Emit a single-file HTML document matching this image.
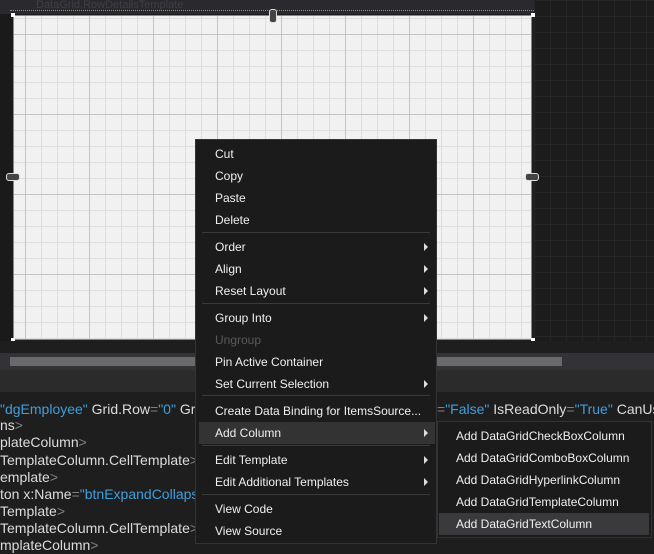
<!DOCTYPE html>
<html><head><style>
body{margin:0;width:654px;height:546px;background:#1e1e1e;overflow:hidden;position:relative;font-family:"Liberation Sans",sans-serif;}
.a{position:absolute}
.top{left:0;top:0;width:654px;height:14px;background:#2a2a2e}
.right{left:534px;top:0;width:120px;height:352px;background:#1c1c1c;
background-image:linear-gradient(#262626 1px,transparent 1px),linear-gradient(90deg,#262626 1px,transparent 1px);background-size:16px 16px}
.surf{left:13px;top:15px;width:519px;height:325px;background:#f1f1f1;
background-image:linear-gradient(#c4c4c4 1px,transparent 1px),linear-gradient(90deg,#c4c4c4 1px,transparent 1px),linear-gradient(#dedede 1px,transparent 1px),linear-gradient(90deg,#dedede 1px,transparent 1px);
background-size:64px 80px,64px 80px,16px 16px,16px 16px;background-position:11px 18px,11px 18px,-5px 2px,-5px 2px;
border:1px solid #6d8ac0;box-sizing:border-box}
.code{left:0;top:392px;width:654px;height:154px;background:#1e1e1e;font-size:14px;color:#dcdcdc;line-height:17px}
.code div{white-space:pre;position:absolute;left:0}
.s{color:#3f9fdc}.p{color:#808080}
.menu{left:195px;top:139px;width:242px;height:405px;background:#1b1b1b;border:1px solid #333;box-sizing:border-box;font-size:12px;color:#f0f0f0}
.it{position:absolute;left:19px;height:22px;line-height:22px;white-space:nowrap}
.ar{position:absolute;left:228px;width:0;height:0;border-left:4px solid #ddd;border-top:4px solid transparent;border-bottom:4px solid transparent}
.sep{position:absolute;left:6px;width:228px;height:1px;background:#3a3a3a}
.sub{left:437px;top:421px;width:215px;height:117px;background:#1b1b1b;border:1px solid #333;box-sizing:border-box;font-size:12px;color:#f0f0f0}
</style></head><body>
<div class="a top"></div>
<div class="a" style="left:36px;top:0;font-size:11px;color:#3e3e44;line-height:10px">DataGrid.RowDetailsTemplate</div>
<div class="a" style="left:10px;top:10px;width:524px;border-top:1px dotted #8090b0"></div>
<div class="a right"></div>
<div class="a" style="left:0;top:14px;width:13px;height:340px;background:#1a1a1a"></div>
<div class="a surf"></div>
<div class="a" style="left:11px;top:13px;width:4px;height:4px;background:#fff"></div>
<div class="a" style="left:531px;top:13px;width:4px;height:4px;background:#fff"></div>
<div class="a" style="left:11px;top:338px;width:4px;height:4px;background:#fff"></div>
<div class="a" style="left:531px;top:338px;width:4px;height:4px;background:#fff"></div>
<div class="a" style="left:269px;top:9px;width:8px;height:14px;background:#444;border:1px solid #ddd;border-radius:3px;box-sizing:border-box"></div>
<div class="a" style="left:6px;top:173px;width:14px;height:8px;background:#444;border:1px solid #ddd;border-radius:3px;box-sizing:border-box"></div>
<div class="a" style="left:525px;top:173px;width:14px;height:8px;background:#444;border:1px solid #ddd;border-radius:3px;box-sizing:border-box"></div>
<div class="a" style="left:0;top:341px;width:654px;height:12px;background:#1e1e1e"></div>
<div class="a" style="left:0;top:353px;width:654px;height:17px;background:#333337"></div>
<div class="a" style="left:10px;top:357px;width:552px;height:9px;background:#6a6a6a"></div>
<div class="a" style="left:0;top:370px;width:654px;height:22px;background:#2b2b2b"></div>
<div class="a code">
<div style="top:9px"><span class="s">"dgEmployee"</span> Grid.Row<span class="p">=</span><span class="s">"0"</span> Gr</div>
<div style="top:9px;left:437px"><span class="p">=</span><span class="s">"False"</span> IsReadOnly<span class="p">=</span><span class="s">"True"</span> CanUs</div>
<div style="top:25px">ns<span class="p">&gt;</span></div>
<div style="top:42px">plateColumn<span class="p">&gt;</span></div>
<div style="top:60px">TemplateColumn.CellTemplate<span class="p">&gt;</span></div>
<div style="top:77px">emplate<span class="p">&gt;</span></div>
<div style="top:94px">ton x:Name<span class="p">=</span><span class="s">"btnExpandCollapse"</span></div>
<div style="top:111px">Template<span class="p">&gt;</span></div>
<div style="top:128px">TemplateColumn.CellTemplate<span class="p">&gt;</span></div>
<div style="top:145px">mplateColumn<span class="p">&gt;</span></div>
</div>
<div class="a menu">
<div class="it" style="top:3px">Cut</div>
<div class="it" style="top:25px">Copy</div>
<div class="it" style="top:47px">Paste</div>
<div class="it" style="top:69px">Delete</div>
<div class="sep" style="top:92px"></div>
<div class="it" style="top:96px">Order</div><div class="ar" style="top:103px"></div>
<div class="it" style="top:118px">Align</div><div class="ar" style="top:125px"></div>
<div class="it" style="top:140px">Reset Layout</div><div class="ar" style="top:147px"></div>
<div class="sep" style="top:163px"></div>
<div class="it" style="top:167px">Group Into</div><div class="ar" style="top:174px"></div>
<div class="it" style="top:189px;color:#5a5a5a">Ungroup</div>
<div class="it" style="top:211px">Pin Active Container</div>
<div class="it" style="top:233px">Set Current Selection</div><div class="ar" style="top:240px"></div>
<div class="sep" style="top:255px"></div>
<div class="it" style="top:260px">Create Data Binding for ItemsSource...</div>
<div style="position:absolute;left:3px;top:282px;width:236px;height:22px;background:#333334"></div>
<div class="it" style="top:282px">Add Column</div><div class="ar" style="top:289px"></div>
<div class="sep" style="top:305px"></div>
<div class="it" style="top:309px">Edit Template</div><div class="ar" style="top:316px"></div>
<div class="it" style="top:331px">Edit Additional Templates</div><div class="ar" style="top:338px"></div>
<div class="sep" style="top:354px"></div>
<div class="it" style="top:358px">View Code</div>
<div class="it" style="top:380px">View Source</div>
</div>
<div class="a sub">
<div class="it" style="top:3px;left:18px">Add DataGridCheckBoxColumn</div>
<div class="it" style="top:25px;left:18px">Add DataGridComboBoxColumn</div>
<div class="it" style="top:47px;left:18px">Add DataGridHyperlinkColumn</div>
<div class="it" style="top:69px;left:18px">Add DataGridTemplateColumn</div>
<div style="position:absolute;left:1px;top:91px;width:210px;height:22px;background:#3a3a3c"></div>
<div class="it" style="top:91px;left:18px">Add DataGridTextColumn</div>
</div>
</body></html>
